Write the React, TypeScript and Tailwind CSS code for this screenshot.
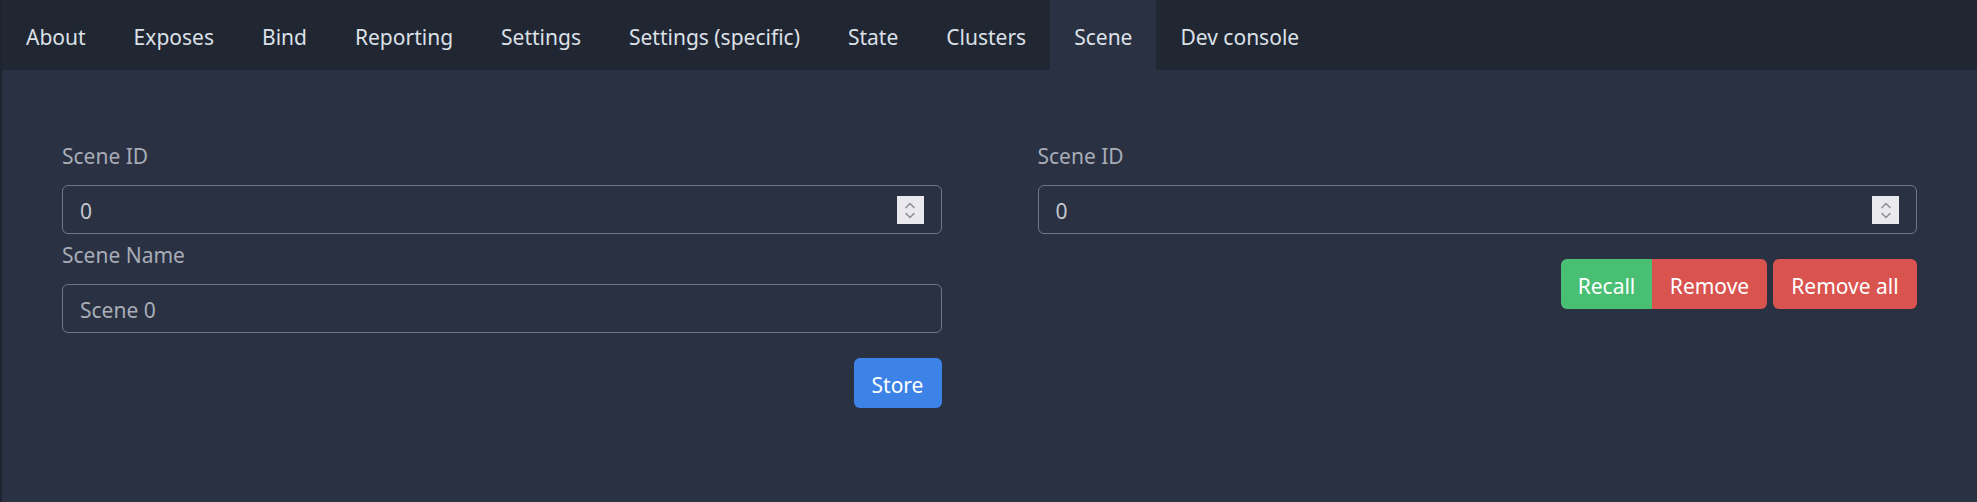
import React from "react";

const tabs = [
  "About",
  "Exposes",
  "Bind",
  "Reporting",
  "Settings",
  "Settings (specific)",
  "State",
  "Clusters",
  "Scene",
  "Dev console",
];

function Spinner() {
  return (
    <div className="absolute right-[18px] top-[11px] w-[27px] h-[28px] bg-[#e9e9ee] flex flex-col items-center justify-center gap-[3px]">
      <svg width="12" height="8" viewBox="0 0 12 8" fill="none">
        <path d="M2 6.5 L6 2.5 L10 6.5" stroke="#8f8f9a" strokeWidth="1.6" strokeLinecap="round" strokeLinejoin="round" />
      </svg>
      <svg width="12" height="8" viewBox="0 0 12 8" fill="none">
        <path d="M2 1.5 L6 5.5 L10 1.5" stroke="#8f8f9a" strokeWidth="1.6" strokeLinecap="round" strokeLinejoin="round" />
      </svg>
    </div>
  );
}

function Field({
  label,
  value,
  number,
  first,
}: {
  label: string;
  value: string;
  number?: boolean;
  first?: boolean;
}) {
  return (
    <div className={first ? "" : "mt-[6px]"}>
      <label className="block text-[21px] leading-[30px] text-[#a7acb7] mb-[14px]">{label}</label>
      <div className="relative">
        <input
          readOnly
          value={value}
          className={
            "block w-full h-[49px] rounded-[6px] border border-[#6f7584] bg-transparent px-[17px] pt-[2px] text-[21px] outline-none " +
            (number ? "text-[#c4c8d0]" : "text-[#a9aeb8]")
          }
        />
        {number && <Spinner />}
      </div>
    </div>
  );
}

export default function App() {
  return (
    <div className="h-screen flex flex-col border-l-2 border-[#1e2330] font-['Noto_Sans','Open_Sans',sans-serif]">
      <nav className="h-[70px] flex bg-[#212633] shrink-0">
        {tabs.map((t) => (
          <div
            key={t}
            className={
              "h-full flex items-center px-6 pt-[5px] text-[21px] text-[#dce0e7] whitespace-nowrap " +
              (t === "Scene" ? "bg-[#2a3142]" : "")
            }
          >
            {t}
          </div>
        ))}
      </nav>
      <main className="flex-1 bg-[#2a3142] px-[60px] pt-[71px]">
        <div className="grid grid-cols-2 gap-[96px]">
          <div>
            <Field label="Scene ID" value="0" number first />
            <Field label="Scene Name" value="Scene 0" />
            <div className="flex justify-end mt-[25px]">
              <button className="h-[50px] w-[88px] pt-[6px] rounded-[6px] bg-[#3d83e7] text-white text-[21px]">
                Store
              </button>
            </div>
          </div>
          <div>
            <Field label="Scene ID" value="0" number first />
            <div className="flex justify-end mt-[25px] gap-[6px]">
              <div className="flex">
                <button className="h-[50px] w-[91px] pt-[6px] rounded-l-[6px] bg-[#49bf74] text-white text-[21px]">
                  Recall
                </button>
                <button className="h-[50px] w-[115px] pt-[6px] rounded-r-[6px] bg-[#d9534f] text-white text-[21px]">
                  Remove
                </button>
              </div>
              <button className="h-[50px] w-[144px] pt-[6px] rounded-[6px] bg-[#d9534f] text-white text-[21px]">
                Remove all
              </button>
            </div>
          </div>
        </div>
      </main>
    </div>
  );
}
